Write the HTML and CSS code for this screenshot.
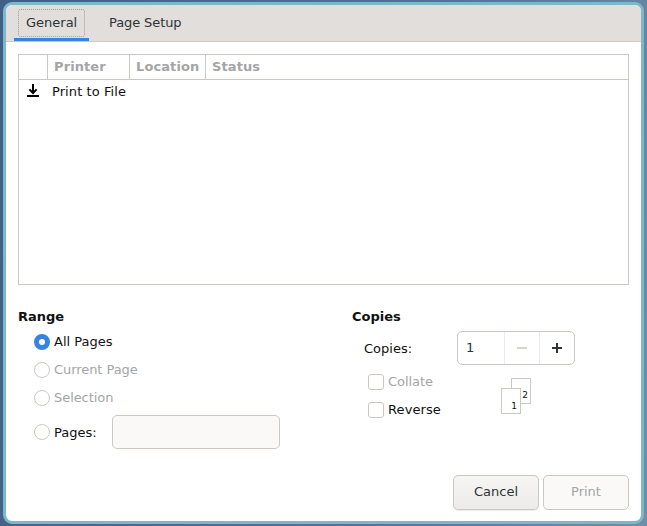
FILE: index.html
```html
<!DOCTYPE html>
<html lang="en">
<head>
<meta charset="utf-8">
<title>Print</title>
<link rel="stylesheet" href="styles.css">
</head>
<body>
<div class="window">
  <div class="tabbar">
    <div class="tab active"><span class="tab-label">General</span></div>
    <div class="tab"><span class="tab-label">Page Setup</span></div>
  </div>
  <div class="content">
    <div class="tree">
      <div class="tree-head">
        <div class="col col-icon"></div>
        <div class="col col-printer">Printer</div>
        <div class="col col-location">Location</div>
        <div class="col col-status">Status</div>
      </div>
      <div class="tree-row">
        <svg class="row-icon" width="14" height="14" viewBox="0 0 14 14"><path d="M7 0v8.5M3.4 5.4 7 9l3.6-3.6" fill="none" stroke="#000" stroke-width="2"/><path d="M1 12h12" stroke="#000" stroke-width="2"/></svg>
        <span>Print to File</span>
      </div>
    </div>
    <div class="options">
      <section class="range">
        <h2 class="heading">Range</h2>
        <div class="radios">
          <div class="radio-row"><span class="radio checked"></span><span>All Pages</span></div>
          <div class="radio-row muted"><span class="radio"></span><span>Current Page</span></div>
          <div class="radio-row muted"><span class="radio"></span><span>Selection</span></div>
          <div class="radio-row pages"><span class="radio"></span><span class="pages-label">Pages:</span><div class="entry"></div></div>
        </div>
      </section>
      <section class="copies">
        <h2 class="heading">Copies</h2>
        <div class="copies-row">
          <span class="copies-label">Copies:</span>
          <div class="spin">
            <span class="spin-value">1</span>
            <span class="spin-btn minus"><svg width="12" height="12" viewBox="0 0 12 12"><path d="M1 6h10" stroke="#d6d3d0" stroke-width="2"/></svg></span>
            <span class="spin-btn"><svg width="12" height="12" viewBox="0 0 12 12"><path d="M1 6h10M6 1v10" stroke="#2e3436" stroke-width="2"/></svg></span>
          </div>
        </div>
        <div class="collate-block">
          <div class="checks">
            <div class="check-row muted"><span class="check"></span><span>Collate</span></div>
            <div class="check-row reverse"><span class="check"></span><span>Reverse</span></div>
          </div>
          <div class="preview">
            <div class="sheet sheet-back">2</div>
            <div class="sheet sheet-front">1</div>
          </div>
        </div>
      </section>
    </div>
    <div class="actions">
      <button class="btn cancel" type="button">Cancel</button>
      <button class="btn print" type="button" disabled>Print</button>
    </div>
  </div>
</div>
</body>
</html>
```

FILE: styles.css
```css
* { box-sizing: border-box; }
html, body { height: 100%; }
body {
  margin: 0;
  padding: 2px 3px;
  background: linear-gradient(100deg, #3f5f85 0%, #527299 60%, #6f8ea8 100%);
  font-family: "DejaVu Sans", sans-serif;
  font-size: 13px;
  color: #111;
  overflow: hidden;
}
.window {
  height: 522px;
  border: 3px solid #7eb6ca;
  border-radius: 9px;
  background: #fff;
  display: flex;
  flex-direction: column;
  overflow: hidden;
}
.tabbar {
  height: 37px;
  flex: none;
  background: #e1dedb;
  border-bottom: 1px solid #cdc7c2;
  display: flex;
  padding-left: 8px;
}
.tab {
  height: 36px;
  padding: 4px 4px 0;
  color: #2e3436;
}
.tab.active { width: 75px; border-bottom: 3px solid #3584e4; }
.tab-label {
  display: flex;
  align-items: center;
  height: 28px;
  padding: 0 8px 1px;
  border: 1px dotted transparent;
  border-radius: 3px;
}
.tab.active .tab-label { border-color: #a09d9a; width: 67px; padding-left: 7px; }
.tab:not(.active) { padding-left: 11px; letter-spacing: -0.1px; }
.content {
  flex: 1;
  display: flex;
  flex-direction: column;
  padding: 12px 12px 11px;
}
.tree {
  height: 231px;
  flex: none;
  border: 1px solid #cdc7c2;
}
.tree-head {
  display: flex;
  height: 25px;
  border-bottom: 1px solid #cdc7c2;
  color: #a3a5a6;
  font-weight: bold;
  line-height: 23px;
}
.col { padding-left: 6px; border-right: 1px solid #cdc7c2; letter-spacing: 0.1px; }
.col-icon { width: 29px; }
.col-printer { width: 82px; }
.col-location { width: 76px; }
.col-status { flex: 1; border-right: 0; }
.tree-row {
  display: flex;
  align-items: center;
  height: 22px;
  padding-left: 7px;
  gap: 12px;
  color: #111;
}
.tree-row span { letter-spacing: 0.08px; }
.row-icon { flex: none; }
.options {
  display: flex;
  margin-top: 23px;
  flex: 1;
}
.range { width: 334px; }
.heading {
  margin: 0;
  font-size: 13px;
  font-weight: bold;
  line-height: 17px;
  color: #111;
}
.radios { padding: 2px 0 0 16px; }
.radio-row {
  display: flex;
  align-items: center;
  gap: 4px;
  height: 28px;
}
.radio-row.pages { height: 34px; margin-top: 4px; }
.muted { color: #a3a5a6; letter-spacing: -0.06px; }
.radio {
  width: 16px;
  height: 16px;
  flex: none;
  margin-top: 2px;
  border: 1px solid #cdc7c2;
  border-radius: 50%;
  background: #fff;
}
.radio-row.pages .radio { margin-top: 0; }
.radio.checked {
  border: 5px solid #3584e4;
  background: #fff;
}
.pages-label { width: 54px; }
.entry {
  width: 168px;
  height: 34px;
  border: 1px solid #cdc7c2;
  border-radius: 5px;
  background: #faf9f8;
}
.copies { flex: 1; }
.copies-row {
  display: flex;
  align-items: center;
  height: 34px;
  margin-top: 6px;
  padding-left: 12px;
}
.copies-label { width: 93px; }
.spin {
  display: flex;
  width: 118px;
  height: 34px;
  align-items: stretch;
  border: 1px solid #cdc7c2;
  border-radius: 5px;
  background: #fff;
}
.spin-value { width: 46px; padding-left: 8px; line-height: 31px; color: #2e3436; }
.spin-btn {
  flex: 1;
  display: flex;
  align-items: center;
  justify-content: center;
  border-left: 1px solid #ecebe9;
}
.collate-block {
  display: flex;
  padding: 2px 0 0 16px;
}
.checks { width: 133px; }
.check-row {
  display: flex;
  align-items: center;
  gap: 4px;
  height: 28px;
}
.check-row.reverse { letter-spacing: 0.1px; }
.check {
  width: 16px;
  height: 16px;
  flex: none;
  margin-top: 2px;
  border: 1px solid #cdc7c2;
  border-radius: 3px;
  background: #fff;
}
.preview {
  position: relative;
  width: 30px;
  height: 36px;
  margin-top: 11px;
}
.sheet {
  position: absolute;
  width: 20px;
  border: 1px solid #cdc7c2;
  background: #fff;
  font-size: 9px;
  line-height: 10px;
  color: #111;
  display: flex;
  align-items: flex-end;
  justify-content: flex-end;
  padding: 0 3px 2px 0;
}
.sheet-back { left: 10px; top: 0; height: 26px; padding-right: 2px; padding-bottom: 3px; }
.sheet-front { left: 0; top: 10px; height: 26px; }
.actions {
  display: flex;
  justify-content: flex-end;
  gap: 4px;
}
.btn {
  width: 86px;
  height: 35px;
  border: 1px solid #cdc7c2;
  border-radius: 5px;
  font: inherit;
  padding: 0 0 2px;
}
.cancel {
  background: linear-gradient(#f6f5f4, #edebe9);
  color: #2e3436;
  box-shadow: 0 1px 1px rgba(0, 0, 0, 0.08);
}
.print { background: #faf9f8; color: #a3a5a6; }
```
